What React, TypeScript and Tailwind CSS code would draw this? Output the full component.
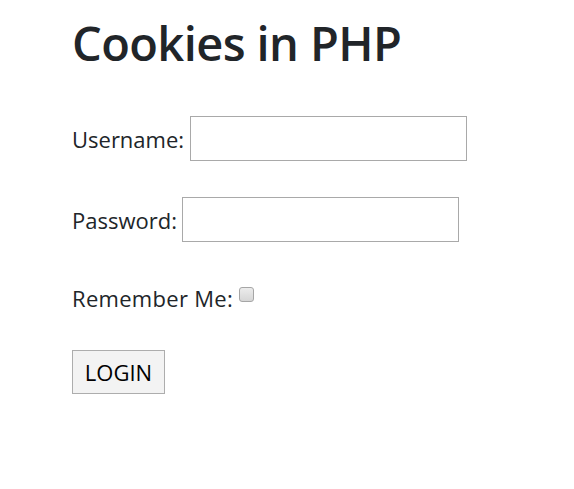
export default function App() {
  return (
    <div className="min-h-[489px] bg-white pl-[72px] pt-[14px] text-[#212529] font-['Open_Sans',sans-serif]">
      <h1 className="text-[47px] leading-[58px] font-semibold tracking-[-0.6px]">Cookies in PHP</h1>
      <form className="mt-[44px] flex flex-col text-[22px]">
        <div className="flex items-center h-[45px]">
          <label htmlFor="username" className="pt-[2px]">Username:</label>
          <input
            id="username"
            type="text"
            className="ml-[6px] w-[277px] h-[45px] border border-[#a9a9a9] bg-white px-2"
          />
        </div>
        <div className="mt-[36px] flex items-center h-[45px]">
          <label htmlFor="password" className="pt-[2px]">Password:</label>
          <input
            id="password"
            type="password"
            className="ml-[5px] w-[277px] h-[45px] border border-[#a9a9a9] bg-white px-2"
          />
        </div>
        <div className="mt-[40px] flex items-center">
          <label htmlFor="remember" className="tracking-[0.3px]">Remember Me:</label>
          <input
            id="remember"
            type="checkbox"
            className="ml-[6px] -mt-[9px] w-[15px] h-[15px] appearance-none rounded-[3px] border border-[#a6a6a6] bg-gradient-to-b from-[#ececec] to-[#d6d6d6]"
          />
        </div>
        <div className="mt-[35px]">
          <button
            type="submit"
            className="w-[93px] h-[44px] border border-[#adadad] bg-[#f3f3f3] text-[22px] text-black"
          >
            LOGIN
          </button>
        </div>
      </form>
    </div>
  );
}
